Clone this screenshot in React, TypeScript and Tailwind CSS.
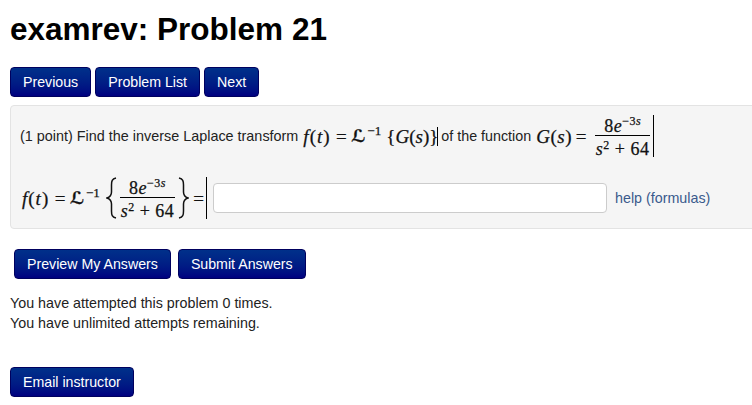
const sans = "font-['Liberation_Sans',Arial,sans-serif]"
const math = "font-['Liberation_Serif','Times_New_Roman',serif] text-[19px] leading-none text-[#111] [-webkit-text-stroke:0.25px_#111]"

function NavButton({ label, className = "" }: { label: string; className?: string }) {
  return (
    <button
      className={`h-[30px] rounded-[4px] border border-[#00005e] bg-gradient-to-b from-[#00308a] to-[#000080] px-3 text-[14.2px] leading-5 text-white ${className}`}
    >
      {label}
    </button>
  )
}

function Fraction() {
  return (
    <span className="inline-flex w-[55px] flex-col items-center text-[18px]">
      <span className="flex h-[20px] items-end tracking-[0.5px]">
        8<i>e</i>
        <span className="relative -top-[8px] text-[12px]">
          −3<i>s</i>
        </span>
      </span>
      <span className="h-px w-full bg-black" />
      <span className="flex h-[22px] items-end tracking-[0.5px]">
        <i>s</i>
        <span className="relative -top-[7px] text-[12px]">2</span>
        <span className="mx-[5px]">+</span>64
      </span>
    </span>
  )
}

function Brace({ flip = false }: { flip?: boolean }) {
  return (
    <svg width="11" height="42" viewBox="0 0 11 42" className={flip ? "-scale-x-100" : ""}>
      <path
        d="M10 1C6 2 5.5 4 5.5 8V15C5.5 18 4 20 1 21C4 22 5.5 24 5.5 27V34C5.5 38 6 40 10 41"
        fill="none"
        stroke="#111"
        strokeWidth="1.5"
      />
    </svg>
  )
}

function Ft() {
  return (
    <span className="inline-block w-[28px] tracking-[1px]">
      <i>f</i>(<i>t</i>)
    </span>
  )
}

function Lap() {
  return (
    <>
      <span className="w-[14px] font-['DejaVu_Sans',sans-serif] text-[17px] font-bold">ℒ</span>
      <span className="relative -top-[6px] w-[20px] pl-[2px] text-[13px]">−1</span>
    </>
  )
}

export default function App() {
  return (
    <div className={`h-[405px] w-[752px] overflow-hidden bg-white ${sans} text-[14.3px] leading-5 text-[#222]`}>
      <div className="px-[10px] pt-[10px]">
        <h1 className="text-[31.5px] font-bold leading-[38px] text-black">examrev: Problem 21</h1>

        <div className="mt-[19px] flex gap-1">
          <NavButton label="Previous" />
          <NavButton label="Problem List" />
          <NavButton label="Next" />
        </div>

        {/* Problem panel */}
        <div className="mt-2 mr-[-20px] h-[124px] rounded-[4px] border border-[#e3e3e3] bg-[#f5f5f5] pl-[9px]">
          <div className="mt-[7px] flex h-[46px] items-center">
            <span className="text-[14.4px]">(1 point) Find the inverse Laplace transform</span>
            <span className={`${math} ml-[5px] flex items-center`}>
              <Ft />
              <span className="mx-[3px] w-[14px] text-center">=</span>
              <Lap />
              <span className="ml-[1px] w-[51px] whitespace-nowrap">
                {"{"}
                <i>G</i>(<i>s</i>){"}"}
              </span>
            </span>
            <span className="mr-[3px] h-[19px] w-px bg-black" />
            <span>of the function</span>
            <span className={`${math} ml-[5px] flex items-center`}>
              <span className="w-[34px] tracking-[0.5px]">
                <i>G</i>(<i>s</i>)
              </span>
              <span className="mx-[4px] w-[14px] text-center">=</span>
              <span className="ml-[3px]">
                <Fraction />
              </span>
            </span>
            <span className="ml-[3px] h-[42px] w-px bg-black" />
          </div>

          <div className="mt-[17px] flex h-[44px] items-center">
            <span className={`${math} ml-[2px] flex items-center`}>
              <Ft />
              <span className="mx-[3px] w-[14px] text-center">=</span>
              <Lap />
              <span className="ml-[2px] flex items-center">
                <Brace />
                <span className="mx-[3px]">
                  <Fraction />
                </span>
                <Brace flip />
              </span>
              <span className="ml-[3px] w-[13px] text-center">=</span>
            </span>
            <span className="ml-[1px] h-[42px] w-px bg-black" />
            <input className="ml-[6px] h-[30px] w-[394px] rounded-[4px] border border-[#ccc] bg-white" />
            <span className="ml-2 text-[#3a5a8c]">help (formulas)</span>
          </div>
        </div>

        <div className="mt-5 ml-1 flex gap-[7px]">
          <NavButton label="Preview My Answers" />
          <NavButton label="Submit Answers" />
        </div>

        <div className="mt-[14px]">
          <p>You have attempted this problem 0 times.</p>
          <p>You have unlimited attempts remaining.</p>
        </div>

        <NavButton label="Email instructor" className="mt-[34px]" />
      </div>
    </div>
  )
}
